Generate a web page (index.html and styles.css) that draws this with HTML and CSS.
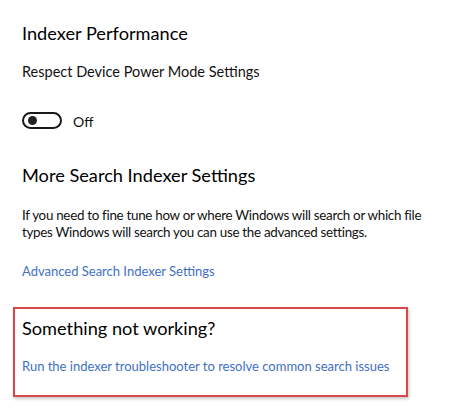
FILE: index.html
```html
<!DOCTYPE html>
<html lang="en">
<head>
<meta charset="utf-8">
<title>Search Indexer Settings</title>
<link rel="stylesheet" href="styles.css">
</head>
<body>
<main class="page">
  <section class="group">
    <h2 class="title">Indexer Performance</h2>
    <p class="label">Respect Device Power Mode Settings</p>
    <div class="toggle-row">
      <span class="toggle"><span class="knob"></span></span>
      <span class="toggle-text">Off</span>
    </div>
  </section>
  <section class="group more">
    <h2 class="title">More Search Indexer Settings</h2>
    <p class="para">If you need to fine tune how or where Windows will search or which file types Windows will search you can use the advanced settings.</p>
    <a class="link adv" href="#">Advanced Search Indexer Settings</a>
  </section>
  <section class="help-box">
    <h2 class="title">Something not working?</h2>
    <a class="link run" href="#">Run the indexer troubleshooter to resolve common search issues</a>
  </section>
</main>
</body>
</html>
```
FILE: styles.css
```css
html, body {
  margin: 0;
  padding: 0;
  background: #ffffff;
}
body {
  width: 474px;
  height: 412px;
  overflow: hidden;
  font-family: Lato, "Open Sans", sans-serif;
  color: #111111;
}
.page {
  padding: 19px 0 0 22px;
}
.title {
  margin: 0;
  font-size: 18.2px;
  line-height: 28px;
  font-weight: 400;
  color: #000000;
  white-space: nowrap;
}
.label {
  margin: 15px 0 0;
  font-size: 14.5px;
  line-height: 20px;
}
.toggle-row {
  margin-top: 30px;
  display: flex;
  align-items: center;
  gap: 11px;
  height: 17px;
}
.toggle {
  box-sizing: border-box;
  width: 40px;
  height: 17px;
  border: 2px solid #1a1a1a;
  border-radius: 9px;
  display: flex;
  align-items: center;
  padding-left: 4px;
}
.knob {
  width: 9px;
  height: 9px;
  border-radius: 50%;
  background: #222222;
}
.toggle-text {
  font-size: 14px;
  line-height: 20px;
  padding-top: 2px;
}
.more {
  margin-top: 32px;
}
.para {
  margin: 18px 0 0;
  font-size: 13.4px;
  letter-spacing: -0.3px;
  line-height: 17px;
  max-width: 408px;
}
.link {
  display: block;
  font-size: 13px;
  line-height: 20px;
  color: #3f70c4;
  text-decoration: none;
  white-space: nowrap;
}
.adv {
  margin-top: 20px;
}
.help-box {
  margin: 26px 0 0 -9px;
  width: 395px;
  box-sizing: border-box;
  border: 2px solid #d8474c;
  box-shadow: 1px 2px 3px rgba(0, 0, 0, 0.22);
  padding: 5px 0 19px 7px;
}
.run {
  margin-top: 14px;
}
```
